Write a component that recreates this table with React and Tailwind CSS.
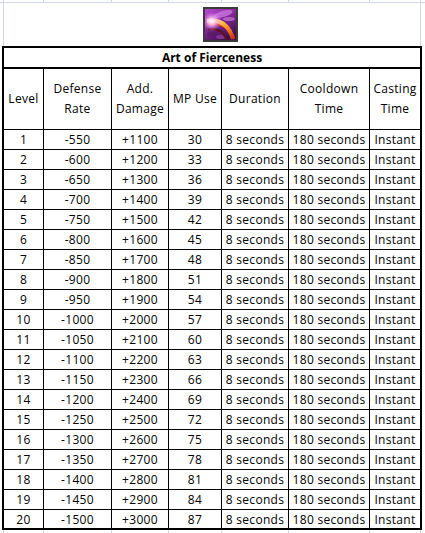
import React from "react";

const W = ["w-[40px]", "w-[68px]", "w-[57px]", "w-[53px]", "w-[67px]", "w-[81px]", "w-[50px]"];

function GridStrip() {
  return (
    <div className="flex h-[3px]">
      <div className="w-[4px] shrink-0 border-r border-[#d0d7e5]" />
      <div className="w-[40px] shrink-0 border-r border-[#d0d7e5]" />
      <div className="w-[68px] shrink-0 border-r border-[#d0d7e5]" />
      <div className="w-[57px] shrink-0 border-r border-[#d0d7e5]" />
      <div className="w-[53px] shrink-0 border-r border-[#d0d7e5]" />
      <div className="w-[67px] shrink-0 border-r border-[#d0d7e5]" />
      <div className="w-[81px] shrink-0 border-r border-[#d0d7e5]" />
      <div className="w-[51px] shrink-0 border-r border-[#d0d7e5]" />
    </div>
  );
}

function SkillIcon() {
  return (
    <svg width="35" height="35" viewBox="0 0 35 35">
      <defs>
        <linearGradient id="bg" x1="0" y1="0" x2="0.6" y2="1">
          <stop offset="0" stopColor="#b848d0" />
          <stop offset="0.45" stopColor="#8a2aa4" />
          <stop offset="1" stopColor="#40104c" />
        </linearGradient>
        <radialGradient id="glow" cx="0.22" cy="0.4" r="0.32">
          <stop offset="0" stopColor="#ffffff" />
          <stop offset="0.35" stopColor="#ffc8f4" stopOpacity="0.85" />
          <stop offset="1" stopColor="#e070f0" stopOpacity="0" />
        </radialGradient>
        <linearGradient id="band" x1="0" y1="0" x2="1" y2="1">
          <stop offset="0" stopColor="#fff6c0" />
          <stop offset="0.35" stopColor="#ffc040" />
          <stop offset="0.75" stopColor="#f06818" />
          <stop offset="1" stopColor="#c03010" />
        </linearGradient>
      </defs>
      <rect width="35" height="35" fill="#3b3b3b" />
      <rect x="2" y="2" width="31" height="31" fill="url(#bg)" />
      <ellipse cx="20" cy="7" rx="10" ry="3" fill="#e098f0" opacity="0.55" transform="rotate(-15 20 7)" />
      <ellipse cx="26" cy="12" rx="6" ry="2" fill="#f0b0f4" opacity="0.45" />
      <ellipse cx="10" cy="27" rx="6" ry="3" fill="#5a1868" opacity="0.7" />
      <ellipse cx="18" cy="30" rx="5" ry="2" fill="#b050c8" opacity="0.5" />
      <path d="M5 22.5 Q 18 19.5 24 33" stroke="#601020" strokeWidth="2.2" fill="none" />
      <path d="M5 17 Q 24 14 31 32" stroke="#d83818" strokeWidth="3" fill="none" />
      <path d="M4 14 Q 24 11 30 32" stroke="url(#band)" strokeWidth="4" fill="none" />
      <rect x="2" y="2" width="31" height="31" fill="url(#glow)" />
    </svg>
  );
}

const rows = Array.from({ length: 20 }, (_, k) => {
  const i = k + 1;
  return [String(i), String(-(500 + 50 * i)), "+" + (1000 + 100 * i), String(27 + 3 * i), "8 seconds", "180 seconds", "Instant"];
});

export default function App() {
  return (
    <div className="w-[425px] h-[533px] overflow-hidden bg-white text-black font-['Open_Sans',sans-serif] text-[12px] tracking-[0.3px]">
      <div className="h-[3px] border-b border-[#d0d7e5]">
        <GridStrip />
      </div>
      <div className="flex h-[43px]">
        <div className="w-[4px] shrink-0 border-r border-[#d0d7e5]" />
        <div className="w-[417px] shrink-0 border-r border-[#d0d7e5] pl-[199px] pt-[4px]">
          <SkillIcon />
        </div>
      </div>
      <div className="ml-[2px] w-[420px] h-[484px] border-2 border-black flex flex-col">
        <div className="h-[21px] shrink-0 border-b-2 border-black text-center font-bold leading-[19px] tracking-normal">
          Art of Fierceness
        </div>
        <div className="h-[61px] shrink-0 flex border-b border-black leading-[20px]">
          {["Level", "Defense\nRate", "Add.\nDamage", "MP Use", "Duration", "Cooldown\nTime", "Casting\nTime"].map((t, c) => (
            <div
              key={c}
              className={`${W[c]} shrink-0 flex items-center justify-center text-center whitespace-pre-line ${c < 6 ? "border-r border-black" : ""}`}
            >
              {t}
            </div>
          ))}
        </div>
        {rows.map((r, k) => (
          <div key={k} className={`flex shrink-0 ${k < 19 ? "h-[20px] border-b border-black" : "h-[18px]"}`}>
            {r.map((t, c) => (
              <div
                key={c}
                className={`${W[c]} shrink-0 text-center leading-[19px] whitespace-nowrap ${c < 6 ? "border-r border-black" : ""}`}
              >
                {t}
              </div>
            ))}
          </div>
        ))}
      </div>
      <GridStrip />
    </div>
  );
}
